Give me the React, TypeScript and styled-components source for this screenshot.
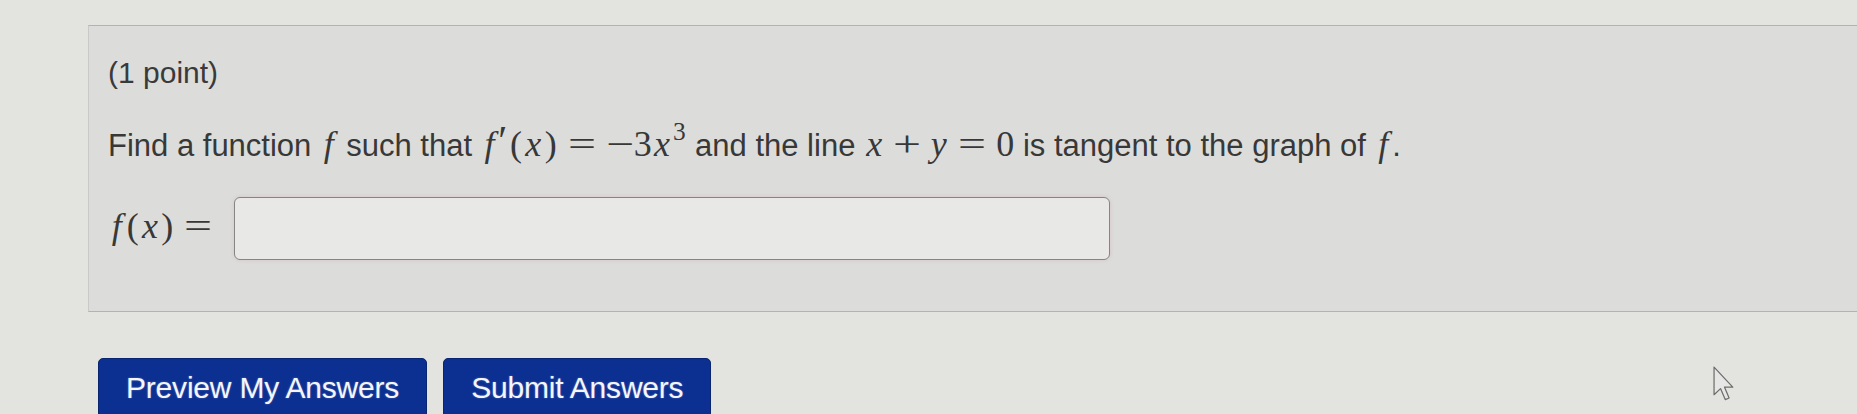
import React from "react";
import styled, { createGlobalStyle } from "styled-components";

const GlobalStyle = createGlobalStyle`
  html, body {
    margin: 0;
    padding: 0;
    background: #e3e3e0;
  }
  body {
    font-family: "Liberation Sans", Arial, sans-serif;
    color: #3a3a3a;
  }
`;

const Page = styled.div`
  position: relative;
  width: 1857px;
  height: 414px;
  overflow: hidden;
  box-sizing: border-box;
  padding: 25px 0 0 88px;
  background: #e3e3e0;
`;

const ProblemPanel = styled.section`
  box-sizing: border-box;
  height: 287px;
  padding: 30px 0 0 19px;
  background: #dcdddb;
  border-top: 1px solid #b3b3b1;
  border-bottom: 1px solid #b3b3b1;
  border-left: 1px solid #c9c9c7;
`;

const PointLabel = styled.div`
  font-size: 30px;
  line-height: 34px;
  color: #3a3a3a;
`;

const Question = styled.p`
  margin: 39px 0 0;
  font-size: 31px;
  line-height: 34px;
  color: #383838;
  white-space: nowrap;
`;

const Formula = styled.span`
  font-family: "Liberation Serif", "Times New Roman", serif;
  font-size: 36px;
  line-height: 0;
  color: #383838;
  white-space: nowrap;
`;

/* one math token, laid out in a box of Computer-Modern-like width */
const Glyph = styled.span<{
  $w: number;
  $italic?: boolean;
  $space?: number;
  $stretch?: boolean;
}>`
  display: inline-block;
  width: ${(p) => p.$w}em;
  margin: 0 ${(p) => p.$space ?? 0}em;
  text-align: center;
  font-style: ${(p) => (p.$italic ? "italic" : "normal")};
  transform: ${(p) => (p.$stretch ? "scaleX(1.38)" : "none")};
`;

const Prime = styled.span`
  display: inline-block;
  width: 0.26em;
  font-size: 1.15em;
  text-align: left;
  vertical-align: 0.02em;
`;

const Sup = styled.span`
  display: inline-block;
  width: 0.56em;
  font-size: 0.707em;
  vertical-align: 0.62em;
  text-align: center;
`;

const AnswerRow = styled.div`
  display: flex;
  align-items: center;
  margin-top: 34px;
`;

const AnswerLabel = styled.div`
  width: 126px;
  flex: none;
  margin-top: 9px;
`;

const AnswerInput = styled.input`
  box-sizing: border-box;
  width: 876px;
  height: 63px;
  margin: 0;
  padding: 0 10px;
  border: 1.5px solid #858585;
  border-radius: 6px;
  background: #e8e8e7;
  box-shadow: 0 0 4px rgba(210, 160, 165, 0.45);
  font-family: "Liberation Sans", Arial, sans-serif;
  font-size: 28px;
  outline: none;
`;

const ButtonRow = styled.div`
  display: flex;
  gap: 16px;
  margin: 46px 0 0 10px;
`;

const ActionButton = styled.button`
  box-sizing: border-box;
  height: 60px;
  padding: 0 27px;
  display: flex;
  align-items: center;
  border: 1px solid #0a256f;
  border-radius: 5px;
  background: #0c2f92;
  color: #f4f6fb;
  font-family: "Liberation Sans", Arial, sans-serif;
  font-size: 30px;
  letter-spacing: -0.2px;
  text-shadow: 0 0 2px rgba(255, 255, 255, 0.35);
  cursor: pointer;
`;

const Pointer = styled.svg`
  position: absolute;
  left: 1713px;
  top: 366px;
`;

export default function App() {
  return (
    <>
      <GlobalStyle />
      <Page>
        <ProblemPanel>
          <PointLabel>(1 point)</PointLabel>
          <Question>
            Find a function{" "}
            <Formula>
              <Glyph $w={0.49} $italic>f</Glyph>
            </Formula>{" "}
            such that{" "}
            <Formula>
              <Glyph $w={0.49} $italic>f</Glyph>
              <Prime>′</Prime>
              <Glyph $w={0.389}>(</Glyph>
              <Glyph $w={0.572} $italic>x</Glyph>
              <Glyph $w={0.389}>)</Glyph>
              <Glyph $w={0.778} $space={0.278} $stretch>=</Glyph>
              <Glyph $w={0.778} $stretch>−</Glyph>
              <Glyph $w={0.5}>3</Glyph>
              <Glyph $w={0.572} $italic>x</Glyph>
              <Sup>3</Sup>
            </Formula>{" "}
            and the line{" "}
            <Formula>
              <Glyph $w={0.572} $italic>x</Glyph>
              <Glyph $w={0.778} $space={0.24} $stretch>+</Glyph>
              <Glyph $w={0.49} $italic>y</Glyph>
              <Glyph $w={0.778} $space={0.29} $stretch>=</Glyph>
              <Glyph $w={0.5}>0</Glyph>
            </Formula>{" "}
            is tangent to the graph of{" "}
            <Formula>
              <Glyph $w={0.49} $italic>f</Glyph>
            </Formula>
            .
          </Question>
          <AnswerRow>
            <AnswerLabel>
              <Formula>
                <Glyph $w={0.49} $italic>f</Glyph>
                <Glyph $w={0.389}>(</Glyph>
                <Glyph $w={0.572} $italic>x</Glyph>
                <Glyph $w={0.389}>)</Glyph>
                <Glyph $w={0.778} $space={0.278} $stretch>=</Glyph>
              </Formula>
            </AnswerLabel>
            <AnswerInput type="text" aria-label="f(x)" />
          </AnswerRow>
        </ProblemPanel>
        <ButtonRow>
          <ActionButton>Preview My Answers</ActionButton>
          <ActionButton>Submit Answers</ActionButton>
        </ButtonRow>
        <Pointer width="21" height="35" viewBox="0 0 12 20" aria-hidden="true">
          <path
            d="M0.6 0.6 L0.6 16.4 L4.3 12.9 L7 19.2 L9.2 18.3 L6.6 12.1 L11.3 12.1 Z"
            fill="#e6e6e4"
            stroke="#6c6c6c"
            strokeWidth="0.7"
            strokeLinejoin="round"
          />
        </Pointer>
      </Page>
    </>
  );
}
